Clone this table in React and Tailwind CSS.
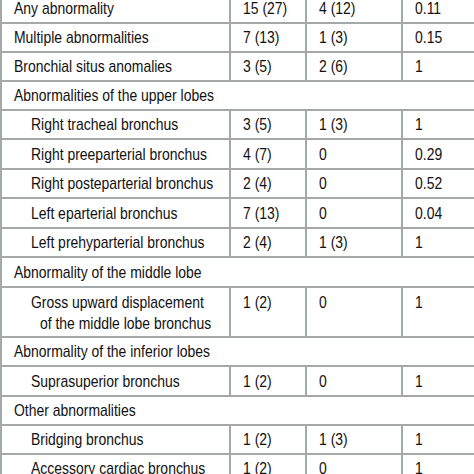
import React from "react";

const rows = [
    { label: "Any abnormality", a: "15 (27)", b: "4 (12)", p: "0.11", h: "h-[29px]" },
    { label: "Multiple abnormalities", a: "7 (13)", b: "1 (3)", p: "0.15", h: "h-[29px]" },
    { label: "Bronchial situs anomalies", a: "3 (5)", b: "2 (6)", p: "1", h: "h-[29px]" },
    { header: "Abnormalities of the upper lobes", h: "h-[29px]" },
    { label: "Right tracheal bronchus", a: "3 (5)", b: "1 (3)", p: "1", sub: true, h: "h-[29px]" },
    { label: "Right preeparterial bronchus", a: "4 (7)", b: "0", p: "0.29", sub: true, h: "h-[30px]" },
    { label: "Right posteparterial bronchus", a: "2 (4)", b: "0", p: "0.52", sub: true, h: "h-[29px]" },
    { label: "Left eparterial bronchus", a: "7 (13)", b: "0", p: "0.04", sub: true, h: "h-[30px]" },
    { label: "Left prehyparterial bronchus", a: "2 (4)", b: "1 (3)", p: "1", sub: true, h: "h-[29px]" },
    { header: "Abnormality of the middle lobe", h: "h-[30px]" },
    {
        label: "Gross upward displacement",
        label2: "of the middle lobe bronchus",
        a: "1 (2)",
        b: "0",
        p: "1",
        sub: true,
        h: "h-[50px]",
    },
    { header: "Abnormality of the inferior lobes", h: "h-[29px]" },
    { label: "Suprasuperior bronchus", a: "1 (2)", b: "0", p: "1", sub: true, h: "h-[30px]" },
    { header: "Other abnormalities", h: "h-[29px]" },
    { label: "Bridging bronchus", a: "1 (2)", b: "1 (3)", p: "1", sub: true, h: "h-[29px]" },
    { label: "Accessory cardiac bronchus", a: "1 (2)", b: "0", p: "1", sub: true, h: "h-[29px]" },
];

// the table face is condensed, so squeeze Liberation Sans horizontally
function T({ children }) {
    return <span className="inline-block whitespace-nowrap origin-left scale-x-[0.82]">{children}</span>;
}

function Row({ row }) {
    if (row.header) {
        return (
            <div className={`${row.h} flex border-b-2 border-[#a3a9a9]`}>
                <div className="w-[229px] shrink-0 flex items-center pl-3">
                    <T>{row.header}</T>
                </div>
            </div>
        );
    }
    const tall = !!row.label2;
    const cell = tall ? "pt-[4px]" : "flex items-center";
    return (
        <div className={`${row.h} flex border-b-2 border-[#a3a9a9]`}>
            <div
                className={`w-[229px] shrink-0 border-r-2 border-[#a3a9a9] ${cell} ${
                    row.sub ? "pl-[29px]" : "pl-3"
                }`}
            >
                {tall ? (
                    <div>
                        <div>
                            <T>{row.label}</T>
                        </div>
                        <div className="pl-[9px]">
                            <T>{row.label2}</T>
                        </div>
                    </div>
                ) : (
                    <T>{row.label}</T>
                )}
            </div>
            <div className={`w-[76px] shrink-0 border-r-2 border-[#a3a9a9] pl-3 ${cell}`}>
                <T>{row.a}</T>
            </div>
            <div className={`w-[96px] shrink-0 border-r-2 border-[#a3a9a9] pl-3 ${cell}`}>
                <T>{row.b}</T>
            </div>
            <div className={`flex-1 pl-3 ${cell}`}>
                <T>{row.p}</T>
            </div>
        </div>
    );
}

export default function App() {
    return (
        <div className="w-[474px] h-[474px] overflow-hidden bg-white">
            <div
                className="-mt-[5px] w-[520px] border-l-2 border-[#a3a9a9] text-[17px] leading-[21px] text-[#111]"
                style={{ fontFamily: '"Liberation Sans", Arial, sans-serif' }}
            >
                {rows.map((row, i) => (
                    <Row key={i} row={row} />
                ))}
            </div>
        </div>
    );
}
